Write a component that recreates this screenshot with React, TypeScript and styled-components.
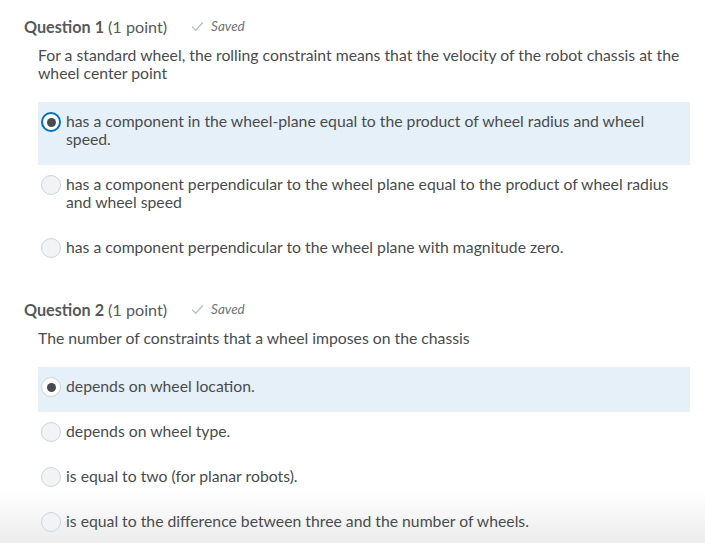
import React from 'react'
import styled, { createGlobalStyle } from 'styled-components'

const GlobalStyle = createGlobalStyle`
  html, body {
    margin: 0;
    padding: 0;
    background: #fff;
  }
  body {
    font-family: Lato, 'Open Sans', sans-serif;
    color: #494c4e;
  }
`

const Page = styled.div`
  width: 705px;
  height: 543px;
  overflow: hidden;
  padding: 15px 15px 0 24px;
  box-sizing: border-box;
  background: linear-gradient(to bottom, #fff 0, #fff 490px, #ececec 543px);
`

const QuestionBlock = styled.section`
  margin-bottom: 25px;
`

const Header = styled.div`
  display: flex;
  align-items: center;
  height: 22px;
  font-size: 16.2px;
  color: #565a5c;
`

const Title = styled.span`
  font-weight: 700;
`

const Points = styled.span`
  margin-left: 4px;
`

const SavedTag = styled.span`
  display: inline-flex;
  align-items: center;
  margin-left: 24px;
  font-size: 13.5px;
  font-style: italic;
  color: #6e7376;
  gap: 7px;
`

const Prompt = styled.p`
  margin: 9px 0 20px 14px;
  font-size: 15.75px;
  line-height: 18px;
  max-width: 652px;
`

const Options = styled.div`
  margin-left: 14px;
  width: 652px;
`

const OptionRow = styled.label<{ $active?: boolean }>`
  display: flex;
  align-items: flex-start;
  padding: 10px 10px 17px 3px;
  background: ${({ $active }) => ($active ? '#e6f0f9' : 'transparent')};
  font-size: 15.75px;
  line-height: 18px;
`

const Radio = styled.span<{ $checked?: boolean; $focus?: boolean }>`
  flex: none;
  width: 20px;
  height: 20px;
  margin: 0 5px -2px 0;
  box-sizing: border-box;
  border-radius: 50%;
  display: flex;
  align-items: center;
  justify-content: center;
  background: ${({ $checked }) => ($checked ? '#fff' : '#f2f3f5')};
  border: ${({ $focus }) => ($focus ? '2px solid #006fbf' : '1px solid #cdd5dc')};

  &::after {
    content: '';
    display: ${({ $checked }) => ($checked ? 'block' : 'none')};
    width: 9px;
    height: 9px;
    border-radius: 50%;
    background: #494c4e;
  }
`

const OptionText = styled.span``

const Check = () => (
  <svg width="13" height="11" viewBox="0 0 13 11">
    <path d="M1.5 6 L4.8 9.2 L11.5 1.8" fill="none" stroke="#bcc1c5" strokeWidth="1.4" strokeLinecap="round" strokeLinejoin="round" />
  </svg>
)

interface OptionData {
  text: string
  checked?: boolean
  focus?: boolean
}

interface QuestionData {
  number: number
  prompt: string
  options: OptionData[]
}

const questions: QuestionData[] = [
  {
    number: 1,
    prompt:
      'For a standard wheel, the rolling constraint means that the velocity of the robot chassis at the wheel center point',
    options: [
      {
        text: 'has a component in the wheel-plane equal to the product of wheel radius and wheel speed.',
        checked: true,
        focus: true,
      },
      {
        text: 'has a component perpendicular to the wheel plane equal to the product of wheel radius and wheel speed',
      },
      { text: 'has a component perpendicular to the wheel plane with magnitude zero.' },
    ],
  },
  {
    number: 2,
    prompt: 'The number of constraints that a wheel imposes on the chassis',
    options: [
      { text: 'depends on wheel location.', checked: true },
      { text: 'depends on wheel type.' },
      { text: 'is equal to two (for planar robots).' },
      { text: 'is equal to the difference between three and the number of wheels.' },
    ],
  },
]

export default function App() {
  return (
    <Page>
      <GlobalStyle />
      {questions.map((q) => (
        <QuestionBlock key={q.number}>
          <Header>
            <Title>Question {q.number}</Title>
            <Points>(1 point)</Points>
            <SavedTag>
              <Check />
              Saved
            </SavedTag>
          </Header>
          <Prompt>{q.prompt}</Prompt>
          <Options>
            {q.options.map((o, i) => (
              <OptionRow key={i} $active={o.checked}>
                <Radio $checked={o.checked} $focus={o.focus} />
                <OptionText>{o.text}</OptionText>
              </OptionRow>
            ))}
          </Options>
        </QuestionBlock>
      ))}
    </Page>
  )
}
